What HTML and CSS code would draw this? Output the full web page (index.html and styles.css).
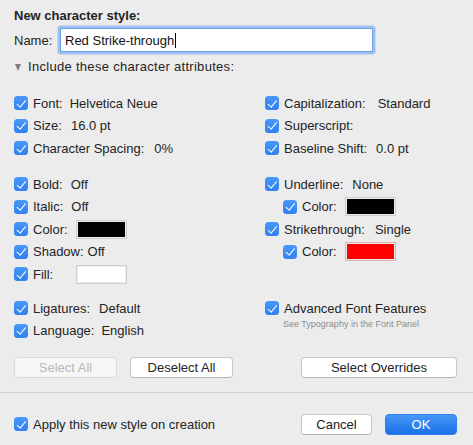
FILE: index.html
```html
<!DOCTYPE html>
<html>
<head>
<meta charset="utf-8">
<link rel="stylesheet" href="styles.css">
</head>
<body>
<div class="dialog">
  <div class="title">New character style:</div>
  <div class="name-row">
    <span class="name-label">Name:</span>
    <div class="input"><span>Red Strike-through</span><span class="caret"></span></div>
  </div>
  <div class="disclosure"><span class="tri"></span>Include these character attributes:</div>

  <div class="section s1">
    <div class="col left">
      <div class="row"><span class="cb"></span><span class="lbl">Font:</span><span class="val g7">Helvetica Neue</span></div>
      <div class="row"><span class="cb"></span><span class="lbl">Size:</span><span class="val g9">16.0 pt</span></div>
      <div class="row"><span class="cb"></span><span class="lbl">Character Spacing:</span><span class="val g10">0%</span></div>
    </div>
    <div class="col right">
      <div class="row"><span class="cb"></span><span class="lbl">Capitalization:</span><span class="val g12">Standard</span></div>
      <div class="row"><span class="cb"></span><span class="lbl">Superscript:</span></div>
      <div class="row"><span class="cb"></span><span class="lbl">Baseline Shift:</span><span class="val g9">0.0 pt</span></div>
    </div>
  </div>

  <div class="section s2">
    <div class="col left">
      <div class="row"><span class="cb"></span><span class="lbl">Bold:</span><span class="val g8">Off</span></div>
      <div class="row"><span class="cb"></span><span class="lbl">Italic:</span><span class="val g8">Off</span></div>
      <div class="row"><span class="cb"></span><span class="lbl lbl-sw">Color:</span><span class="swatch black"></span></div>
      <div class="row"><span class="cb"></span><span class="lbl">Shadow:</span><span class="val g4">Off</span></div>
      <div class="row"><span class="cb"></span><span class="lbl lbl-sw">Fill:</span><span class="swatch white"></span></div>
    </div>
    <div class="col right">
      <div class="row"><span class="cb"></span><span class="lbl">Underline:</span><span class="val g9">None</span></div>
      <div class="row indent"><span class="cb"></span><span class="lbl lbl-sw">Color:</span><span class="swatch black"></span></div>
      <div class="row"><span class="cb"></span><span class="lbl">Strikethrough:</span><span class="val g10">Single</span></div>
      <div class="row indent"><span class="cb"></span><span class="lbl lbl-sw">Color:</span><span class="swatch red"></span></div>
    </div>
  </div>

  <div class="section s3">
    <div class="col left">
      <div class="row"><span class="cb"></span><span class="lbl">Ligatures:</span><span class="val g9">Default</span></div>
      <div class="row"><span class="cb"></span><span class="lbl">Language:</span><span class="val g7">English</span></div>
    </div>
    <div class="col right">
      <div class="row"><span class="cb"></span><span class="lbl">Advanced Font Features</span></div>
      <div class="caption">See Typography in the Font Panel</div>
    </div>
  </div>

  <div class="buttons">
    <button class="btn disabled w103">Select All</button>
    <button class="btn w103">Deselect All</button>
    <span class="spacer"></span>
    <button class="btn w156">Select Overrides</button>
  </div>
</div>
<div class="sep"></div>
<div class="footer">
  <div class="row"><span class="cb"></span><span class="lbl">Apply this new style on creation</span></div>
  <span class="spacer"></span>
  <button class="btn w71">Cancel</button>
  <button class="btn primary w72">OK</button>
</div>
</body>
</html>
```
FILE: styles.css
```css
html, body {
  margin: 0;
  padding: 0;
}
body {
  width: 473px;
  height: 445px;
  background: #ececec;
  font-family: "Liberation Sans", Arial, sans-serif;
  font-size: 13px;
  color: #242424;
  overflow: hidden;
}
.dialog {
  padding: 7px 16px 0 14px;
}
.title {
  font-weight: bold;
  line-height: 18px;
}
.name-row {
  display: flex;
  align-items: center;
  margin-top: 4px;
  height: 22px;
}
.name-label {
  width: 47px;
}
.input {
  width: 311px;
  height: 22px;
  box-sizing: border-box;
  background: #fff;
  border-radius: 1px;
  box-shadow: 0 0 0 1px #6c9fe2, 0 0 0 3.5px #9cc0f0;
  display: flex;
  align-items: center;
  padding-left: 4px;
  color: #111;
}
.caret {
  display: inline-block;
  width: 1px;
  height: 15px;
  background: #000;
  margin-left: 1px;
}
.disclosure {
  margin-top: 8px;
  line-height: 16px;
  display: flex;
  align-items: center;
  letter-spacing: 0.3px;
}
.tri {
  width: 0;
  height: 0;
  border-left: 3.5px solid transparent;
  border-right: 3.5px solid transparent;
  border-top: 7px solid #7d7d7d;
  margin: 1px 7px 0 1px;
}
.section {
  display: flex;
}
.s1 { margin-top: 16.75px; }
.s2 { margin-top: 13.5px; }
.s3 { margin-top: 11.5px; }
.col.left { width: 251px; }
.col.right { flex: 1; }
.row {
  height: 22.5px;
  display: flex;
  align-items: center;
}
.row.indent { padding-left: 18px; }
.cb {
  width: 14px;
  height: 14px;
  border-radius: 3.5px;
  background: linear-gradient(#4a98f8, #2f80f2);
  margin-right: 5px;
  flex: none;
  position: relative;
}
.cb::after {
  content: "";
  position: absolute;
  left: 4.5px;
  top: 1.5px;
  width: 3.5px;
  height: 7.5px;
  border: solid #fff;
  border-width: 0 1.8px 1.8px 0;
  transform: rotate(40deg);
}
.val.g4 { margin-left: 4px; }
.val.g7 { margin-left: 7px; }
.val.g8 { margin-left: 8px; }
.val.g9 { margin-left: 9px; }
.val.g10 { margin-left: 10px; }
.val.g12 { margin-left: 12px; }
.lbl-sw {
  width: 43px;
  flex: none;
}
.swatch {
  width: 51px;
  height: 19px;
  box-sizing: border-box;
  border: 1px solid #cdcdcd;
  padding: 1px;
  background-clip: content-box;
}
.swatch.black { background-color: #000; }
.swatch.white { background-color: #fff; }
.swatch.red { background-color: #fe0000; border-color: #e0b0b0; }
.caption {
  font-size: 9px;
  color: #8c8c8c;
  padding-left: 18px;
  line-height: 11px;
  margin-top: 0;
}
.buttons {
  display: flex;
  margin-top: 15px;
  gap: 13px;
}
.spacer { flex: 1; }
.btn {
  height: 21px;
  box-sizing: border-box;
  border: 1px solid #c6c6c6;
  border-bottom-color: #b4b4b4;
  border-radius: 4px;
  background: #fff;
  font-family: "Liberation Sans", Arial, sans-serif;
  font-size: 13px;
  color: #242424;
  padding: 0;
  line-height: 19px;
}
.btn.disabled {
  background: #f6f6f6;
  border-color: #dadada;
  color: #b9b9b9;
}
.btn.primary {
  background: linear-gradient(#4596f8, #1b72e8);
  border-color: #2d7ef0;
  color: #fff;
}
.w103 { width: 103px; }
.w156 { width: 156px; }
.w71 { width: 71px; }
.w72 { width: 72px; }
.sep {
  margin-top: 14px;
  height: 1px;
  background: #cfcfcf;
}
.footer {
  display: flex;
  align-items: center;
  padding: 21px 16px 0 14px;
  gap: 13px;
}
.footer .row { height: 21px; }
```
